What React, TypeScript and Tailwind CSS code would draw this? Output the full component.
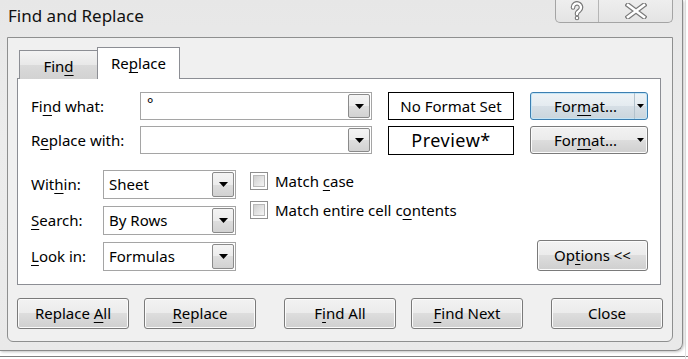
import React from "react";

const font = { fontFamily: '"Noto Sans", "Open Sans", sans-serif' };

function U({ children }: { children: React.ReactNode }) {
  return <span className="underline underline-offset-[3px] decoration-1">{children}</span>;
}

function Arrow() {
  return (
    <svg width="9" height="5" viewBox="0 0 9 5">
      <path d="M0 0H9L4.5 5Z" fill="#000" />
    </svg>
  );
}

function DropBtn() {
  return (
    <div className="w-[22px] h-full border border-[#8a8a8a] rounded-[2px] bg-[linear-gradient(to_bottom,#f4f4f4_0%,#ececec_50%,#dedede_50%,#d2d2d2_100%)] flex items-center justify-center">
      <Arrow />
    </div>
  );
}

function Btn({ children, w = "w-[112px]", h = "h-[31px]" }: { children: React.ReactNode; w?: string; h?: string }) {
  return (
    <div
      className={`${w} ${h} border border-[#7a7a7a] rounded-[3px] bg-[linear-gradient(to_bottom,#f2f2f2_0%,#ebebeb_50%,#dddddd_50%,#cfcfcf_100%)] shadow-[inset_0_0_0_1px_#fbfbfb] flex items-center justify-center text-[15px] text-black`}
    >
      {children}
    </div>
  );
}

function Check() {
  return (
    <div className="w-[18px] h-[18px] border border-[#8f8f8f] bg-white p-[2px]">
      <div className="w-full h-full bg-[linear-gradient(135deg,#cfcfcf_0%,#e6e6e6_60%,#f4f4f4_100%)] border border-[#b9b9b9]" />
    </div>
  );
}

function Select({ value }: { value: string }) {
  return (
    <div className="w-[133px] h-[29px] border border-[#a5a5a5] bg-white flex items-center pl-[5px] pr-[1px] py-[1px]">
      <span className="flex-1 text-[15px]">{value}</span>
      <DropBtn />
    </div>
  );
}

export default function App() {
  return (
    <div
      className="w-[688px] h-[359px] bg-white overflow-hidden text-black bg-[linear-gradient(to_right,transparent_685px,#e3e3e3_685px,#e3e3e3_686px,transparent_686px),linear-gradient(to_bottom,transparent_356px,#7f7f7f_356px,#7f7f7f_357px,transparent_357px)]"
      style={font}
    >
      <div className="w-[683px] h-[351px] bg-[linear-gradient(to_bottom,#e7e7e7_0%,#ececec_40%,#e9e9e9_100%)] border-r border-b border-[#8a8a8a] rounded-br-[8px] shadow-[1px_1px_3px_rgba(0,0,0,0.25)] flex flex-col">
        <div className="h-[37px] flex justify-between items-start">
          <div className="pl-[8px] pt-[5px] text-[17px] leading-[22px] text-[#111]">Find and Replace</div>
          <div className="mr-[9px] flex h-[23px] border border-t-0 border-[#a4a4a4] rounded-b-[5px] overflow-hidden bg-[linear-gradient(to_bottom,#eeeeee,#e4e4e4)]">
            <div className="w-[43px] h-full flex items-center justify-center border-r border-[#b5b5b5]">
              <svg width="14" height="20" viewBox="0 0 14 20">
                <path d="M3 6.5 A4 4 0 1 1 9.5 9.5 C7.5 10.8 7 11.5 7 13" fill="none" stroke="#777" strokeWidth="4.6" strokeLinecap="round" />
                <circle cx="7" cy="17" r="2.3" fill="#777" />
                <path d="M3 6.5 A4 4 0 1 1 9.5 9.5 C7.5 10.8 7 11.5 7 13" fill="none" stroke="#fff" strokeWidth="2.4" strokeLinecap="round" />
                <circle cx="7" cy="17" r="1.2" fill="#fff" />
              </svg>
            </div>
            <div className="w-[73px] h-full flex items-center justify-center">
              <svg width="22" height="16" viewBox="0 0 22 16">
                <path d="M3 2L19 14M19 2L3 14" stroke="#7a7a7a" strokeWidth="5" strokeLinecap="square" />
                <path d="M3 2L19 14M19 2L3 14" stroke="#fff" strokeWidth="2.6" strokeLinecap="square" />
              </svg>
            </div>
          </div>
        </div>

        <div className="ml-[7px] w-[666px] h-[305px] border border-[#8e8f8f] rounded-b-[6px] bg-[#f0f0f0] flex flex-col">
          <div className="ml-[11px] mt-[9px] flex items-end -mb-px relative z-10 text-[15px]">
            <div className="w-[78px] h-[29px] border border-r-0 border-b-0 border-[#8c8e94] bg-[linear-gradient(to_bottom,#f3f3f3_0%,#e8e8e8_50%,#dadada_50%,#d2d2d2_100%)] flex items-center justify-center pt-[2px]">
              <span>Fin<U>d</U></span>
            </div>
            <div className="w-[83px] h-[32px] border border-b-0 border-[#8c8e94] bg-white flex items-center justify-center">
              <span>Re<U>p</U>lace</span>
            </div>
          </div>

          <div className="ml-[9px] w-[644px] h-[207px] border border-[#8c8e94] bg-white pl-[13px] pt-[13px] text-[15px]">
            <div className="flex items-center h-[28px]">
              <div className="w-[109px]">Fi<U>n</U>d what:</div>
              <div className="w-[232px] h-[28px] border border-[#a5a5a5] flex items-stretch p-[1px] pl-[6px]">
                <span className="flex-1 leading-[18px]">°</span>
                <DropBtn />
              </div>
              <div className="ml-[16px] w-[126px] h-[28px] border border-black flex items-center justify-center">No Format Set</div>
              <div className="ml-[16px] w-[118px] h-[28px] border border-[#3c7fb1] rounded-[3px] bg-[linear-gradient(to_bottom,#eef3f6_0%,#e4ebf0_50%,#d6dfe6_50%,#cbd5dc_100%)] shadow-[inset_0_0_0_1px_#c4e5f6] flex items-stretch">
                <div className="flex-1 flex items-center justify-center pl-[6px]">
                  <span>For<U>m</U>at...</span>
                </div>
                <div className="w-[12px] border-l border-[#b2c2cc] flex items-center justify-center mr-[1px]">
                  <svg width="7" height="4" viewBox="0 0 7 4"><path d="M0 0H7L3.5 4Z" fill="#000" /></svg>
                </div>
              </div>
            </div>
            <div className="flex items-center h-[28px] mt-[6px]">
              <div className="w-[109px]">R<U>e</U>place with:</div>
              <div className="w-[232px] h-[28px] border border-[#a5a5a5] flex items-stretch p-[1px]">
                <span className="flex-1" />
                <DropBtn />
              </div>
              <div className="ml-[16px] w-[126px] h-[29px] border border-black flex items-center justify-center text-[18px] tracking-[0.5px]">Preview*</div>
              <div className="ml-[16px] w-[118px] h-[28px] border border-[#7a7a7a] rounded-[3px] bg-[linear-gradient(to_bottom,#f2f2f2_0%,#ebebeb_50%,#dddddd_50%,#cfcfcf_100%)] shadow-[inset_0_0_0_1px_#fbfbfb] flex items-stretch">
                <div className="flex-1 flex items-center justify-center pl-[6px]">
                  <span>For<U>m</U>at...</span>
                </div>
                <div className="w-[12px] flex items-center justify-center mr-[1px]">
                  <svg width="7" height="4" viewBox="0 0 7 4"><path d="M0 0H7L3.5 4Z" fill="#000" /></svg>
                </div>
              </div>
            </div>

            <div className="flex justify-between items-end mt-[16px] w-[617px]">
              <div className="flex">
                <div className="flex flex-col gap-[7px]">
                  <div className="flex items-center">
                    <div className="w-[72px]">Wit<U>h</U>in:</div>
                    <Select value="Sheet" />
                  </div>
                  <div className="flex items-center">
                    <div className="w-[72px]"><U>S</U>earch:</div>
                    <Select value="By Rows" />
                  </div>
                  <div className="flex items-center">
                    <div className="w-[72px]"><U>L</U>ook in:</div>
                    <Select value="Formulas" />
                  </div>
                </div>
                <div className="ml-[14px] flex flex-col gap-[6px]">
                  <div className="flex items-center gap-[7px]">
                    <Check />
                    <span>Match <U>c</U>ase</span>
                  </div>
                  <div className="flex items-center gap-[7px]">
                    <Check />
                    <span>Match entire cell c<U>o</U>ntents</span>
                  </div>
                </div>
              </div>
              <Btn w="w-[111px]" h="h-[31px]">
                <span>Op<U>t</U>ions &lt;&lt;</span>
              </Btn>
            </div>
          </div>

          <div className="ml-[9px] mt-[13px] flex">
            <Btn><span>Replace <U>A</U>ll</span></Btn>
            <div className="ml-[15px]"><Btn><span><U>R</U>eplace</span></Btn></div>
            <div className="ml-[28px]"><Btn><span>F<U>i</U>nd All</span></Btn></div>
            <div className="ml-[15px]"><Btn><span><U>F</U>ind Next</span></Btn></div>
            <div className="ml-[28px]"><Btn><span>Close</span></Btn></div>
          </div>
        </div>
      </div>
    </div>
  );
}
